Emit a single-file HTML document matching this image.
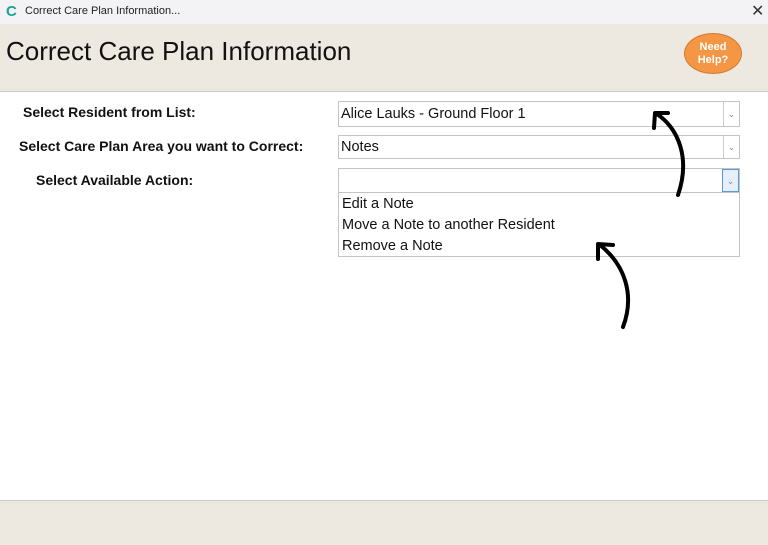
<html><head><style>
body{margin:0;width:768px;height:544px;position:relative;background:#fff;font-family:"Liberation Sans",sans-serif;overflow:hidden}
.a{position:absolute}
.lbl{position:absolute;font-weight:bold;font-size:14px;color:#111}
.cb{position:absolute;left:338px;width:402px;border:1px solid #c4c4c4;background:#fff;font-size:14.5px;color:#111;box-sizing:border-box}
.cb span{position:absolute;left:2px;top:3px}
.btn{position:absolute;right:0;top:0;bottom:0;width:15px;border-left:1px solid #ccc;font-size:9px;color:#888;text-align:center}
</style></head><body>
<div class="a" style="left:0;top:0;width:768px;height:24px;background:#f3f3f5"></div>
<div class="a" style="left:6px;top:3px;font-size:15px;font-weight:bold;color:#1aa39a">C</div>
<div class="a" style="left:25px;top:5px;font-size:11px;color:#222">Correct Care Plan Information...</div>
<div class="a" style="left:751px;top:1px;font-size:16px;color:#333">✕</div>
<div class="a" style="left:0;top:24px;width:768px;height:67px;background:#ede9e0;border-bottom:1px solid #ccc"></div>
<div class="a" style="left:6px;top:36px;font-size:26px;color:#111">Correct Care Plan Information</div>
<div class="a" style="left:684px;top:33px;width:58px;height:41px;border-radius:50%;background:#f59645;border:1px solid #d07a30;box-sizing:border-box;color:#fff;font-weight:bold;font-size:11px;text-align:center;line-height:13px;padding-top:7px">Need<br>Help?</div>
<div class="lbl" style="left:23px;top:104px">Select Resident from List:</div>
<div class="lbl" style="left:19px;top:138px">Select Care Plan Area you want to Correct:</div>
<div class="lbl" style="left:36px;top:172px">Select Available Action:</div>
<div class="cb" style="top:101px;height:26px"><span style="top:4px">Alice Lauks - Ground Floor 1</span><div class="btn" style="line-height:24px">⌄</div></div>
<div class="cb" style="top:135px;height:24px"><span>Notes</span><div class="btn" style="line-height:22px">⌄</div></div>
<div class="cb" style="top:168px;height:25px"><div class="btn" style="line-height:22px;border:1px solid #5a9bd5;background:#e5f0fb">⌄</div></div>
<div class="cb" style="top:192px;height:65px;line-height:21px;padding:1px 3px">Edit a Note<br>Move a Note to another Resident<br>Remove a Note</div>
<svg class="a" style="left:0;top:0" width="768" height="544"><g fill="none" stroke="#000" stroke-width="4" stroke-linecap="round" stroke-linejoin="round">
<path d="M678 195 C690 160 680 130 657 114"/><path d="M654 128 L655 113 L668 113"/>
<path d="M623 327 C635 295 625 265 600 245"/><path d="M598 259 L598 244 L613 245"/></g></svg>
<div class="a" style="left:0;top:500px;width:768px;height:44px;background:#ede9e0;border-top:1px solid #ccc"></div>
</body></html>
